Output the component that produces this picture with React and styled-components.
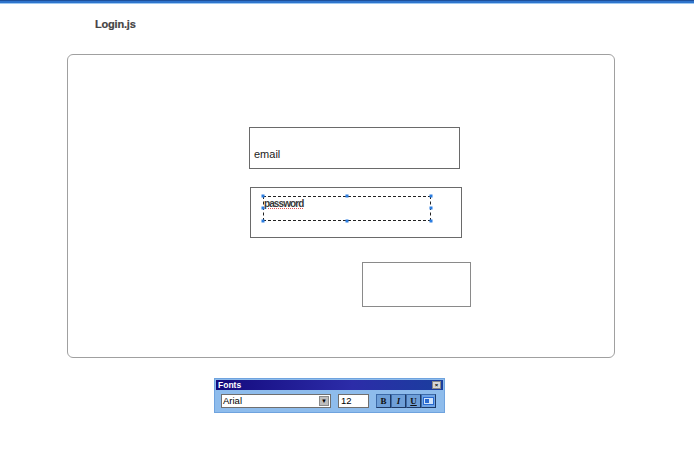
import React from "react";
import styled, { createGlobalStyle } from "styled-components";

const Global = createGlobalStyle`
  html, body {
    margin: 0;
    background: #fff;
    font-family: "Liberation Sans", Arial, sans-serif;
  }
`;

const TopBar = styled.div`
  height: 4px;
  background: linear-gradient(#1d4f9a 0, #1d4f9a 1px, #2f74cc 1px, #2f74cc 3px, #9cc8f2 3px);
`;

const Title = styled.div`
  padding: 14px 0 0 95px;
  height: 18px;
  font-size: 11px;
  font-weight: 600;
  color: #444;
  letter-spacing: -0.2px;
  -webkit-text-stroke: 0.2px #444;
`;

const Card = styled.div`
  margin: 18px 0 0 67px;
  width: 546px;
  height: 302px;
  border: 1.5px solid #a0a0a0;
  border-radius: 6px;
  display: flex;
  flex-direction: column;
`;

const Field = styled.div`
  margin-left: ${(p) => p.left}px;
  margin-top: ${(p) => p.top}px;
  width: ${(p) => p.w}px;
  height: ${(p) => p.h}px;
  box-sizing: border-box;
  border: 1px solid ${(p) => p.color || "#6a6a6a"};
  position: relative;
  font-size: 11px;
  color: #222;
`;

const EmailText = styled.span`
  position: absolute;
  left: 4px;
  top: 20px;
`;

const Selection = styled.div`
  position: absolute;
  left: 12px;
  top: 8px;
  width: 168px;
  height: 25px;
  box-sizing: border-box;
  border: 1.5px dashed #222;
`;

const Handle = styled.span`
  position: absolute;
  width: 3px;
  height: 3px;
  background: #2a7de1;
  left: ${(p) => p.x};
  top: ${(p) => p.y};
  transform: translate(-50%, -50%);
`;

const PassText = styled.span`
  position: absolute;
  left: 0;
  top: 1px;
  font-size: 10px;
  font-weight: bold;
  letter-spacing: -0.9px;
  color: #3a3a3a;
  text-decoration: underline dotted #e05050;
  text-decoration-thickness: 1px;
  text-underline-offset: 1px;
`;

const Toolbar = styled.div`
  margin: 20px 0 0 214px;
  width: 231px;
  height: 35px;
  box-sizing: border-box;
  background: #8ebcec;
  border: 1px solid #6fa3de;
  display: flex;
  flex-direction: column;
`;

const TitleBar = styled.div`
  height: 10px;
  margin: 1px 1px 0;
  padding: 0 2px;
  background: linear-gradient(90deg, #140a7e, #2c2ca8 60%, #1a3e9e);
  color: #fff;
  font-size: 8.5px;
  font-weight: 600;
  line-height: 10px;
  display: flex;
  justify-content: space-between;
  align-items: center;
`;

const CloseBtn = styled.span`
  width: 7px;
  height: 6px;
  background: #d8d8d8;
  border: 1px solid #888;
  font-size: 6px;
  line-height: 6px;
  color: #000;
  text-align: center;
`;

const Controls = styled.div`
  display: flex;
  align-items: center;
  padding: 4px 0 0 6px;
`;

const Select = styled.div`
  width: 107px;
  height: 12px;
  background: #fff;
  border: 1px solid #6f6f6f;
  font-size: 9.5px;
  line-height: 12px;
  padding-left: 1px;
  display: flex;
  justify-content: space-between;
`;

const Arrow = styled.span`
  width: 10px;
  height: 10px;
  margin: 1px;
  background: #bdbdbd;
  border: 1px solid #8a8a8a;
  box-sizing: border-box;
  font-size: 6px;
  line-height: 9px;
  text-align: center;
`;

const SizeBox = styled.div`
  margin-left: 7px;
  width: 27px;
  height: 12px;
  background: #fff;
  border: 1px solid #6f6f6f;
  font-size: 9.5px;
  line-height: 12px;
  padding-left: 2px;
`;

const BtnGroup = styled.div`
  display: flex;
  margin-left: 7px;
`;

const StyleBtn = styled.span`
  width: 15px;
  height: 14px;
  box-sizing: border-box;
  border: 1px solid #3c6aa8;
  border-right-color: #1e3a66;
  border-bottom-color: #1e3a66;
  background: ${(p) => (p.icon ? "#6fa4e6" : "#6e9fd8")};
  font-family: "Liberation Serif", serif;
  font-size: 9px;
  font-weight: bold;
  font-style: ${(p) => (p.italic ? "italic" : "normal")};
  text-decoration: ${(p) => (p.under ? "underline" : "none")};
  line-height: 12px;
  color: #111;
  display: flex;
  align-items: center;
  justify-content: center;
`;

export default function App() {
  return (
    <>
      <Global />
      <TopBar />
      <Title>Login.js</Title>
      <Card>
        <Field left={181} top={72} w={211} h={42}>
          <EmailText>email</EmailText>
        </Field>
        <Field left={182} top={18} w={212} h={51}>
          <Selection>
            <PassText>password</PassText>
          </Selection>
          <Handle x="12px" y="8px" />
          <Handle x="96px" y="8px" />
          <Handle x="180px" y="8px" />
          <Handle x="180px" y="20px" />
          <Handle x="12px" y="33px" />
          <Handle x="96px" y="33px" />
          <Handle x="180px" y="33px" />
          <Handle x="12px" y="20px" />
        </Field>
        <Field left={294} top={24} w={109} h={45} color="#8a8a8a" />
      </Card>
      <Toolbar>
        <TitleBar>
          <span>Fonts</span>
          <CloseBtn>×</CloseBtn>
        </TitleBar>
        <Controls>
          <Select>
            <span>Arial</span>
            <Arrow>▼</Arrow>
          </Select>
          <SizeBox>12</SizeBox>
          <BtnGroup>
            <StyleBtn>B</StyleBtn>
            <StyleBtn italic>I</StyleBtn>
            <StyleBtn under>U</StyleBtn>
            <StyleBtn icon>
              <svg width="11" height="8" viewBox="0 0 11 8">
                <rect x="0.5" y="0.5" width="10" height="7" fill="#cfe3fa" stroke="#2a6ad0" />
                <rect x="2" y="2" width="4" height="4" fill="#2a6ad0" />
              </svg>
            </StyleBtn>
          </BtnGroup>
        </Controls>
      </Toolbar>
    </>
  );
}
